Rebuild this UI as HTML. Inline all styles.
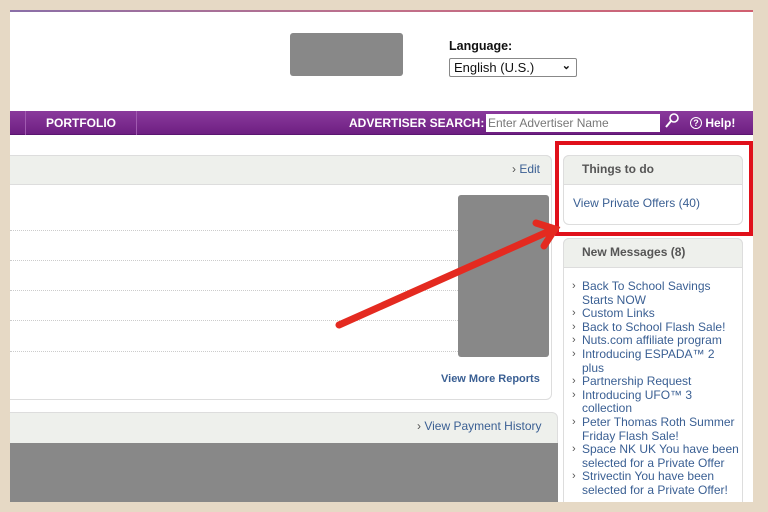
<!DOCTYPE html>
<html><head><style>
*{margin:0;padding:0;box-sizing:border-box}
body{width:768px;height:512px;background:#e6d9c5;position:relative;overflow:hidden;font-family:"Liberation Sans",Arial,sans-serif;font-size:12px}
.a{position:absolute}
.link{color:#3a5f93}
.dot{border-top:1px dotted #ccc;height:0}
.msg li{list-style:none;padding-left:10px;position:relative;line-height:13.6px}
.msg li:before{content:"›";position:absolute;left:0;color:#555;font-size:11px}
</style></head><body>
<div class="a" style="left:10px;top:10px;width:743px;height:492px;background:#fff"></div>
<div class="a" style="left:10px;top:10px;width:743px;height:2px;background:linear-gradient(90deg,#8a6fa8,#c0708a,#d06070)"></div>
<div class="a" style="left:290px;top:33px;width:113px;height:43px;background:#888;border-radius:3px"></div>
<div class="a" style="left:449px;top:39px;font-weight:bold;font-size:12.5px;color:#111">Language:</div>
<div class="a" style="left:449px;top:58px;width:128px;height:19px;border:1px solid #888;border-radius:2px;font-size:13px;padding:1px 4px;color:#111">English (U.S.)<span style="position:absolute;right:5px;top:0;font-size:11px;font-weight:bold">⌄</span></div>
<div class="a" style="left:10px;top:111px;width:743px;height:24px;background:linear-gradient(#8a3a9c,#6e1f82);border-bottom:1px solid #5a1670"></div>
<div class="a" style="left:25px;top:111px;width:1px;height:24px;background:#a05ab0"></div>
<div class="a" style="left:136px;top:111px;width:1px;height:24px;background:#a05ab0"></div>
<div class="a" style="left:46px;top:116px;color:#fff;font-weight:bold;font-size:12px">PORTFOLIO</div>
<div class="a" style="left:349px;top:116px;color:#fff;font-weight:bold;font-size:12px">ADVERTISER SEARCH:</div>
<div class="a" style="left:486px;top:114px;width:174px;height:18px;background:#fff;color:#777;font-size:12px;padding:2px 2px">Enter Advertiser Name</div>
<svg class="a" style="left:664px;top:112px" width="16" height="16"><circle cx="10" cy="6" r="4" fill="none" stroke="#fff" stroke-width="1.6"/><line x1="7" y1="9" x2="2" y2="15" stroke="#fff" stroke-width="2"/></svg>
<div class="a" style="left:690px;top:116px;color:#fff;font-weight:bold;font-size:12px"><span style="display:inline-block;width:12px;height:12px;border:1px solid #fff;border-radius:50%;font-size:9px;text-align:center;line-height:10px;vertical-align:1px">?</span> Help!</div>
<div class="a" style="left:0;top:155px;width:552px;height:245px;border:1px solid #ddd;border-radius:6px;background:#fff"></div>
<div class="a" style="left:0;top:155px;width:552px;height:30px;border:1px solid #ddd;border-radius:6px 6px 0 0;background:#eef0ec"></div>
<div class="a link" style="left:512px;top:162px;font-size:12px"><span style="color:#555">›</span> Edit</div>
<div class="a dot" style="left:10px;top:230px;width:448px"></div>
<div class="a dot" style="left:10px;top:260px;width:448px"></div>
<div class="a dot" style="left:10px;top:290px;width:448px"></div>
<div class="a dot" style="left:10px;top:320px;width:448px"></div>
<div class="a dot" style="left:10px;top:351px;width:448px"></div>
<div class="a" style="left:458px;top:195px;width:91px;height:162px;background:#888;border-radius:3px"></div>
<div class="a link" style="left:441px;top:373px;font-weight:bold;font-size:11px">View More Reports</div>
<div class="a" style="left:0;top:412px;width:558px;height:100px;border:1px solid #ddd;border-radius:6px;background:#eef0ec"></div>
<div class="a link" style="left:417px;top:419px;font-size:12px"><span style="color:#555">›</span> View Payment History</div>
<div class="a" style="left:10px;top:443px;width:548px;height:59px;background:#888"></div>
<div class="a" style="left:563px;top:155px;width:180px;height:70px;border:1px solid #ddd;border-radius:6px;background:#fff"></div>
<div class="a" style="left:563px;top:155px;width:180px;height:30px;border:1px solid #ddd;border-radius:6px 6px 0 0;background:#eef0ec"></div>
<div class="a" style="left:582px;top:162px;font-weight:bold;color:#555;font-size:12px">Things to do</div>
<div class="a link" style="left:573px;top:196px;font-size:12px">View Private Offers (40)</div>
<div class="a" style="left:555px;top:141px;width:198px;height:95px;border:4px solid #e0101a"></div>
<div class="a" style="left:563px;top:238px;width:180px;height:274px;border:1px solid #ddd;border-radius:6px;background:#fff"></div>
<div class="a" style="left:563px;top:238px;width:180px;height:30px;border:1px solid #ddd;border-radius:6px 6px 0 0;background:#eef0ec"></div>
<div class="a" style="left:582px;top:245px;font-weight:bold;color:#555;font-size:12px">New Messages (8)</div>
<ul class="a msg link" style="left:572px;top:280px;width:170px;font-size:12px">
<li>Back To School Savings<br>Starts NOW</li>
<li>Custom Links</li>
<li>Back to School Flash Sale!</li>
<li>Nuts.com affiliate program</li>
<li>Introducing ESPADA™ 2<br>plus</li>
<li>Partnership Request</li>
<li>Introducing UFO™ 3<br>collection</li>
<li>Peter Thomas Roth Summer<br>Friday Flash Sale!</li>
<li>Space NK UK You have been<br>selected for a Private Offer</li>
<li>Strivectin You have been<br>selected for a Private Offer!</li>
</ul>
<div class="a" style="left:0;top:502px;width:768px;height:10px;background:#e6d9c5"></div>
<div class="a" style="left:0;top:0;width:10px;height:512px;background:#e6d9c5"></div>
<svg class="a" style="left:0;top:0" width="768" height="512"><g stroke="#e42a20" stroke-width="7" stroke-linecap="round" fill="none"><line x1="339" y1="325" x2="554" y2="229"/><polyline points="536,223 555,229 544,246"/></g></svg>
</body></html>
